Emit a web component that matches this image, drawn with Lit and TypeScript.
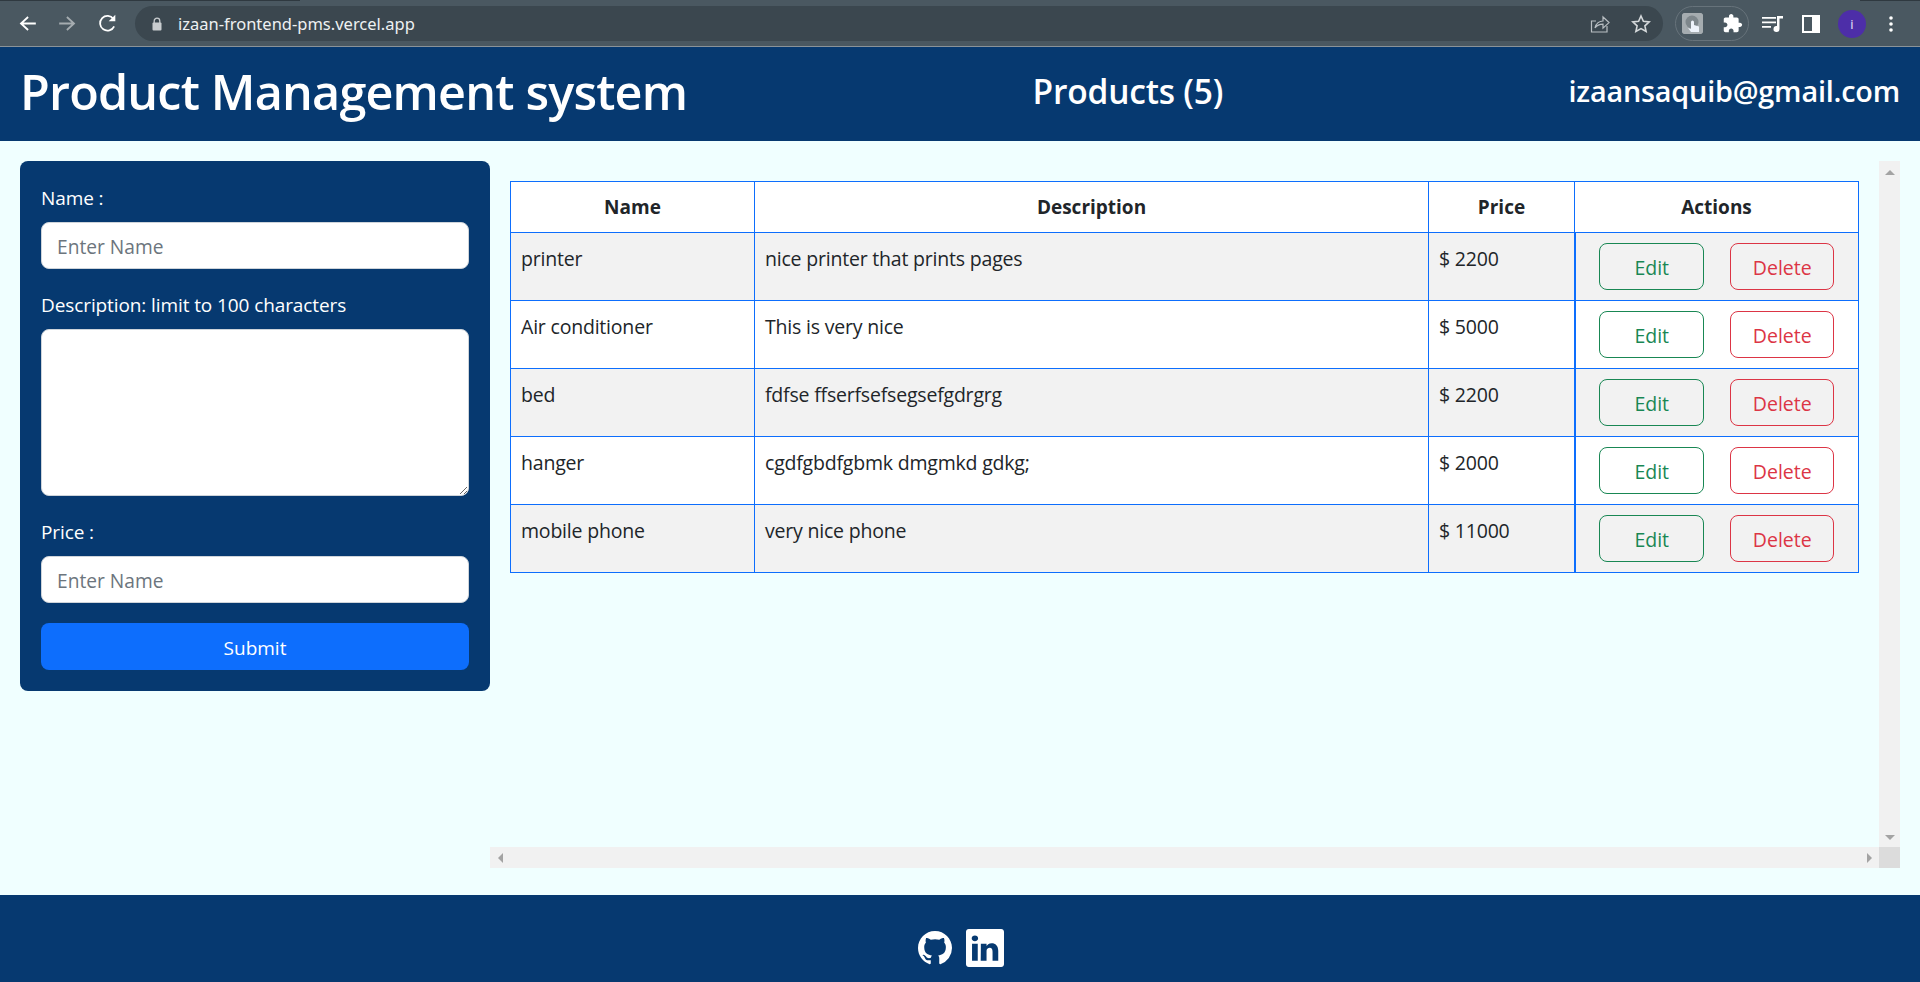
import { LitElement, html, css } from "lit";
import { customElement } from "lit/decorators.js";

const rows = [
  ["printer", "nice printer that prints pages", "$ 2200"],
  ["Air conditioner", "This is very nice", "$ 5000"],
  ["bed", "fdfse ffserfsefsegsefgdrgrg", "$ 2200"],
  ["hanger", "cgdfgbdfgbmk dmgmkd gdkg;", "$ 2000"],
  ["mobile phone", "very nice phone", "$ 11000"],
];

const GH = "M8 0C3.58 0 0 3.58 0 8c0 3.54 2.29 6.53 5.47 7.59.4.07.55-.17.55-.38 0-.19-.01-.82-.01-1.49-2.01.37-2.53-.49-2.69-.94-.09-.23-.48-.94-.82-1.13-.28-.15-.68-.52-.01-.53.63-.01 1.08.58 1.23.82.72 1.21 1.87.87 2.33.66.07-.52.28-.87.51-1.07-1.78-.2-3.64-.89-3.64-3.95 0-.87.31-1.59.82-2.15-.08-.2-.36-1.02.08-2.12 0 0 .67-.21 2.2.82.64-.18 1.32-.27 2-.27.68 0 1.36.09 2 .27 1.53-1.04 2.2-.82 2.2-.82.44 1.1.16 1.92.08 2.12.51.56.82 1.27.82 2.15 0 3.07-1.87 3.75-3.65 3.95.29.25.54.73.54 1.48 0 1.07-.01 1.93-.01 2.2 0 .21.15.46.55.38A8.013 8.013 0 0016 8c0-4.42-3.58-8-8-8z";
const LI = "M0 1.146C0 .513.526 0 1.175 0h13.65C15.474 0 16 .513 16 1.146v13.708c0 .633-.526 1.146-1.175 1.146H1.175C.526 16 0 15.487 0 14.854V1.146zm4.943 12.248V6.169H2.542v7.225h2.401zm-1.2-8.212c.837 0 1.358-.554 1.358-1.248-.015-.709-.52-1.248-1.342-1.248-.822 0-1.359.54-1.359 1.248 0 .694.521 1.248 1.327 1.248h.016zm4.908 8.212V9.359c0-.216.016-.432.08-.586.173-.431.568-.878 1.232-.878.869 0 1.216.662 1.216 1.634v3.865h2.401V9.25c0-2.22-1.184-3.252-2.764-3.252-1.274 0-1.845.7-2.165 1.193v.025h-.016a5.54 5.54 0 0 1 .016-.025V6.169h-2.4c.03.678 0 7.225 0 7.225h2.4z";
const PUZZLE = "M20.5 11H19V7c0-1.1-.9-2-2-2h-4V3.5C13 2.12 11.88 1 10.5 1S8 2.12 8 3.5V5H4c-1.1 0-1.99.9-1.99 2v3.8H3.5c1.49 0 2.7 1.21 2.7 2.7s-1.21 2.7-2.7 2.7H2V20c0 1.1.9 2 2 2h3.8v-1.5c0-1.49 1.21-2.7 2.7-2.7 1.49 0 2.7 1.21 2.7 2.7V22H17c1.1 0 2-.9 2-2v-4h1.500c1.380 0 2.500-1.120 2.500-2.500S21.880 11 20.500 11z";

@customElement("app-root")
export class AppRoot extends LitElement {
  static styles = css`
    :host {
      display: flex;
      flex-direction: column;
      width: 1920px;
      height: 982px;
      overflow: hidden;
      background: #f0ffff;
      font-family: "Open Sans", "Liberation Sans", sans-serif;
      color: #212529;
    }
    * { box-sizing: border-box; }

    .chrome {
      flex: none;
      height: 47px;
      padding-top: 1px;
      background-color: #4a5861;
      background-image: linear-gradient(#2f3940, #2f3940), linear-gradient(#2f3940, #2f3940);
      background-size: 300px 1px, 60px 1px;
      background-position: left top, right top;
      background-repeat: no-repeat;
      border-bottom: 1px solid #8a9399;
      display: flex;
      align-items: center;
      color: #fff;
    }
    .nav { display: flex; width: 135px; padding-left: 18px; gap: 21px; flex: none; }
    .nav svg { width: 19px; height: 19px; display: block; }
    .dim { opacity: 0.5; }
    .pill {
      flex: none;
      width: 1528px;
      height: 35px;
      border-radius: 18px;
      background: #3b474f;
      display: flex;
      align-items: center;
      padding-left: 16px;
      color: #eef1f2;
      font-family: "Noto Sans", sans-serif;
      font-size: 16.5px;
    }
    .pill .lock { width: 12px; height: 14px; margin: 0 15px 0 0; flex: none; }
    .pill .grow { flex: 1; }
    .pill .act { width: 20px; height: 20px; margin-right: 21px; flex: none; }
    .pill .act.star { margin-right: 12px; }
    .ext {
      flex: none;
      margin-left: 12px;
      width: 74px;
      height: 35px;
      border: 1px solid #67737b;
      border-radius: 18px;
      display: flex;
      align-items: center;
      padding-left: 6px;
      gap: 19px;
    }
    .thumb { width: 21px; height: 21px; border-radius: 3px; background: #aab1b5; display: block; }
    .puzzle { width: 21px; height: 21px; display: block; }
    .tools { flex: none; display: flex; align-items: center; margin-left: 13px; }
    .media { width: 21px; height: 18px; margin-right: 19px; display: block; }
    .side { width: 18px; height: 18px; margin-right: 18px; display: block; }
    .avatar {
      width: 28px;
      height: 28px;
      border-radius: 50%;
      background: #4d2ea8;
      font-size: 13px;
      display: flex;
      align-items: center;
      justify-content: center;
      margin-right: 23px;
      color: #e8e4f8;
    }
    .dots { width: 4px; height: 16px; display: block; }

    header {
      flex: none;
      height: 94px;
      background: #063970;
      color: #fff;
      display: flex;
      justify-content: space-between;
      align-items: center;
      padding: 0 20px 6px 20px;
    }
    h1 { margin: 0; font-size: 48.5px; font-weight: 600; letter-spacing: -0.8px; line-height: 1.2; white-space: nowrap; }
    h2 { margin: 0; font-size: 33.5px; font-weight: 600; letter-spacing: -0.2px; line-height: 1.2; }
    h3 { margin: 0; font-size: 28.8px; font-weight: 600; letter-spacing: -0.2px; line-height: 1.2; text-align: right; }

    main {
      flex: 1;
      min-height: 0;
      display: flex;
      padding: 20px 20px 27px;
    }
    .panel {
      flex: none;
      width: 470px;
      height: 530px;
      background: #063970;
      border-radius: 8px;
      padding: 22px 21px 21px;
      color: #fff;
      display: flex;
      flex-direction: column;
    }
    label { display: block; font-size: 19px; line-height: 30px; letter-spacing: -0.1px; margin-bottom: 9px; }
    .control {
      display: block;
      width: 100%;
      height: 47px;
      border: 1px solid #ced4da;
      border-radius: 8px;
      padding: 2px 15px 0;
      font: inherit;
      font-size: 19.2px;
      background: #fff;
      margin-bottom: 21px;
      color: #212529;
    }
    .control::placeholder { color: #6c757d; opacity: 1; }
    textarea.control { height: 168px; padding: 8px 15px; }
    .control.last { margin-bottom: 20px; }
    .submit {
      display: block;
      width: 100%;
      height: 47px;
      border: 0;
      border-radius: 8px;
      padding: 2px 0 0;
      background: #0d6efd;
      color: #fff;
      font: inherit;
      font-size: 19px;
    }

    .area {
      flex: 1;
      min-width: 0;
      display: grid;
      grid-template-columns: 1fr 21px;
      grid-template-rows: 1fr 21px;
    }
    .view { padding: 20px 20px 0 20px; min-width: 0; }
    table {
      width: 1348px;
      table-layout: fixed;
      border-collapse: collapse;
      font-size: 19.5px;
      letter-spacing: -0.2px;
      background: #fff;
    }
    .c1 { width: 244px; }
    .c2 { width: 674px; }
    .c3 { width: 146px; }
    .c4 { width: 284px; }
    th, td { border: 1px solid #0d6efd; text-align: left; vertical-align: top; }
    th { height: 51px; text-align: center; font-weight: 700; font-size: 19px; letter-spacing: 0; line-height: 50px; padding: 0 8px; }
    td { height: 68px; line-height: 30px; padding: 11px 8px 0 10px; }
    tbody tr:nth-child(odd) td { background: #f2f2f2; }
    td.acts { border-left-width: 2px; padding: 0; vertical-align: middle; }
    .btns { display: flex; justify-content: center; gap: 26px; }
    .btn {
      height: 47px;
      border-radius: 8px;
      background: transparent;
      border: 1px solid currentColor;
      font: inherit;
      padding: 3px 0 0;
    }
    .edit { color: #198754; width: 105px; }
    .del { color: #dc3545; width: 104px; }

    .sb { background: #f1f1f1; display: flex; align-items: center; justify-content: space-between; }
    .sb.v { flex-direction: column; padding: 9px 0 7px; }
    .sb.h { padding: 0 7px 0 8px; }
    .corner { background: #dcdcdc; }
    .tri { display: block; width: 0; height: 0; border-style: solid; border-color: transparent; }
    .up { border-width: 0 5px 5px; border-bottom-color: #a3a3a3; }
    .down { border-width: 5px 5px 0; border-top-color: #a3a3a3; }
    .left { border-width: 5px 5px 5px 0; border-right-color: #a3a3a3; }
    .right { border-width: 5px 0 5px 5px; border-left-color: #a3a3a3; }

    footer {
      flex: none;
      height: 87px;
      background: #063970;
      display: flex;
      justify-content: center;
      align-items: center;
      gap: 14px;
      padding: 34px 0 16px 1px;
      color: #fff;
    }
    .gh { width: 34px; height: 34px; display: block; }
    .li { width: 38px; height: 38px; display: block; }
  `;

  render() {
    return html`
      <div class="chrome">
        <div class="nav">
          <svg viewBox="0 0 16 16" fill="none" stroke="currentColor" stroke-width="1.500"><path d="M15 8H2.500M8.500 2.500 2.500 8 8.500 13.500"/></svg>
          <svg class="dim" viewBox="0 0 16 16" fill="none" stroke="currentColor" stroke-width="1.500"><path d="M1 8h12.500M7.500 2.500 13.500 8 7.500 13.500"/></svg>
          <svg viewBox="0 0 16 16" fill="none" stroke="currentColor" stroke-width="1.500"><path d="M13.600 10.400A6.200 6.200 0 1 1 13 4.200"/><path d="M14.600 0.600v5.600H9z" fill="currentColor" stroke="none"/></svg>
        </div>
        <div class="pill">
          <svg class="lock" viewBox="0 0 12 14"><path d="M3.200 6V4a2.800 2.800 0 0 1 5.600 0v2" fill="none" stroke="#c9cdd0" stroke-width="1.300"/><rect x="1.500" y="5.600" width="9" height="8" rx="1" fill="#c9cdd0"/></svg>
          <span>izaan-frontend-pms.vercel.app</span>
          <span class="grow"></span>
          <svg class="act" viewBox="0 0 20 20" fill="none" stroke="#b9bfc3" stroke-width="1.200"><path d="M17 12v6H1.500V7H6"/><path d="M5 14c1-4.500 4.500-7 8-7V3l6 5.600-6 5.600v-4c-3 0-6 1-8 3.800z"/></svg>
          <svg class="act star" viewBox="0 0 20 20" fill="none" stroke="#d5d9db" stroke-width="1.600"><path d="M10 2l2.400 5.300 5.800.6-4.300 3.900 1.200 5.700L10 14.600 4.900 17.500l1.200-5.700L1.800 7.900l5.800-.6z"/></svg>
        </div>
        <div class="ext">
          <svg class="thumb" viewBox="0 0 21 21"><rect width="21" height="21" rx="3" fill="#a5acb0"/><circle cx="10" cy="9" r="6.500" fill="#7e878c"/><path d="M9 9a1.500 1.500 0 0 1 3 0v3l5 1.500V19H9l-3-4 3 1z" fill="#eef3fb"/></svg>
          <svg class="puzzle" viewBox="0 0 24 24"><path fill="#fff" d="${PUZZLE}"/></svg>
        </div>
        <div class="tools">
          <svg class="media" viewBox="0 0 21 18"><path fill="#fff" d="M0 2h14v1.800H0zM0 6.500h14v1.800H0zM0 11h9v1.800H0zM15 1h6v2.500h-3.500V14a3 3 0 1 1-2.500-2.900z"/></svg>
          <svg class="side" viewBox="0 0 18 18"><path fill="#fff" fill-rule="evenodd" d="M0 0h18v18H0zM2 2v14h8V2z"/></svg>
          <div class="avatar">i</div>
          <svg class="dots" viewBox="0 0 4 16" fill="#fff"><circle cx="2" cy="2" r="1.800"/><circle cx="2" cy="8" r="1.800"/><circle cx="2" cy="14" r="1.800"/></svg>
        </div>
      </div>

      <header>
        <h1>Product Management system</h1>
        <h2>Products (5)</h2>
        <h3>izaansaquib@gmail.com</h3>
      </header>

      <main>
        <form class="panel">
          <label>Name :</label>
          <input class="control" placeholder="Enter Name" />
          <label>Description: limit to 100 characters</label>
          <textarea class="control"></textarea>
          <label>Price :</label>
          <input class="control last" placeholder="Enter Name" />
          <button class="submit" type="button">Submit</button>
        </form>

        <div class="area">
          <div class="view">
            <table>
              <colgroup><col class="c1" /><col class="c2" /><col class="c3" /><col class="c4" /></colgroup>
              <thead><tr><th>Name</th><th>Description</th><th>Price</th><th>Actions</th></tr></thead>
              <tbody>
                ${rows.map(
                  (r) => html`<tr>
                    <td>${r[0]}</td><td>${r[1]}</td><td>${r[2]}</td>
                    <td class="acts"><div class="btns">
                      <button class="btn edit" type="button">Edit</button>
                      <button class="btn del" type="button">Delete</button>
                    </div></td>
                  </tr>`
                )}
              </tbody>
            </table>
          </div>
          <div class="sb v"><span class="tri up"></span><span class="tri down"></span></div>
          <div class="sb h"><span class="tri left"></span><span class="tri right"></span></div>
          <div class="corner"></div>
        </div>
      </main>

      <footer>
        <svg class="gh" viewBox="0 0 16 16" fill="currentColor"><path d="${GH}"/></svg>
        <svg class="li" viewBox="0 0 16 16" fill="currentColor"><path d="${LI}"/></svg>
      </footer>
    `;
  }
}
